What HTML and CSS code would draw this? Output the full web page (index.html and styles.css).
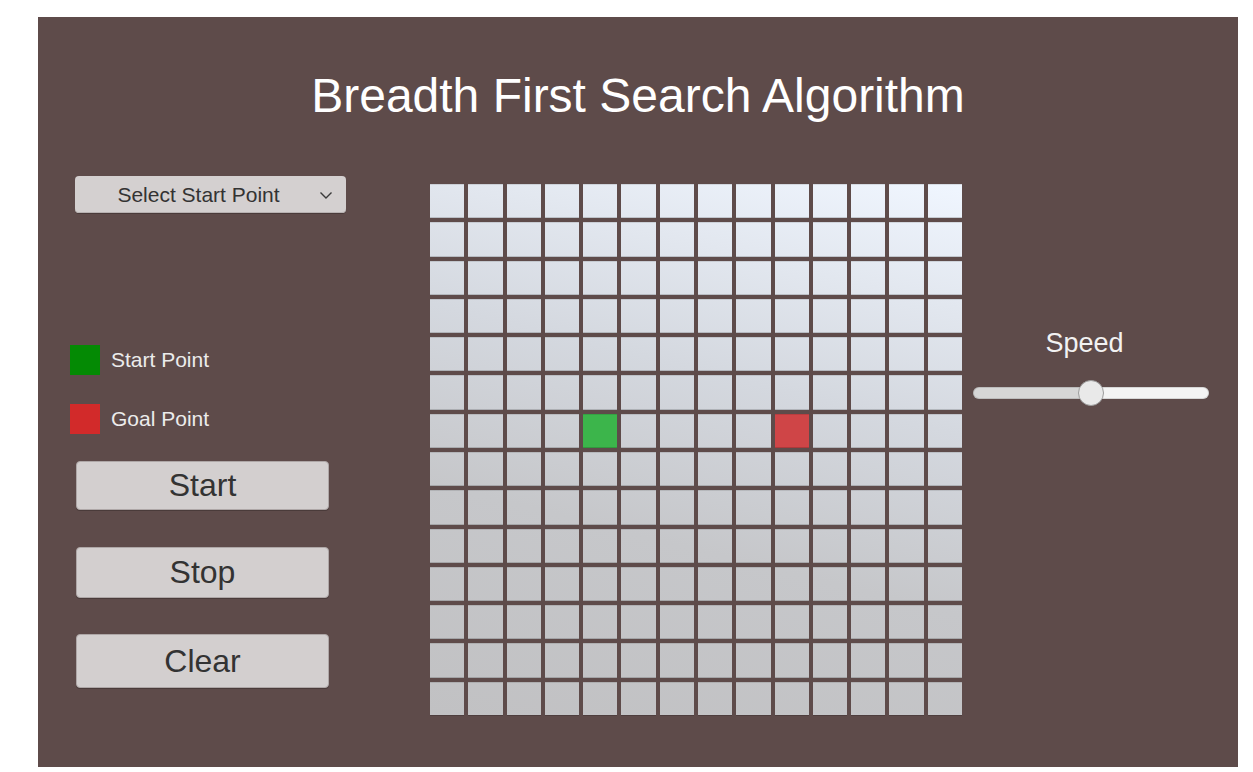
FILE: index.html
```html
<!DOCTYPE html>
<html lang="en">
<head>
  <meta charset="UTF-8" />
  <meta name="viewport" content="width=device-width, initial-scale=1.0" />
  <title>Breadth First Search Algorithm</title>
  <link rel="stylesheet" href="styles.css">
</head>
<body>
  <div class="panel">
    <h1 class="title">Breadth First Search Algorithm</h1>

    <div class="main">
      <div class="controls">
        <div class="dropdown">
          <span>Select Start Point</span>
          <svg class="chevron" width="14" height="9" viewBox="0 0 14 9">
            <polyline points="1.5,1.5 7,7 12.5,1.5" fill="none" stroke="#3a3a3a" stroke-width="1.4" />
          </svg>
        </div>

        <div class="legend">
          <div class="legend-item"><span class="swatch start"></span>Start Point</div>
          <div class="legend-item"><span class="swatch goal"></span>Goal Point</div>
        </div>

        <button class="btn btn-start">Start</button>
        <button class="btn btn-stop">Stop</button>
        <button class="btn btn-clear">Clear</button>
      </div>

      <div id="grid" class="grid"></div>

      <div class="speed">
        <div class="speed-label">Speed</div>
        <div class="slider">
          <div class="track"></div>
          <div class="knob"></div>
        </div>
      </div>
    </div>
  </div>

  <script src="grid.js"></script>
</body>
</html>
```

FILE: styles.css
```css
body {
  margin: 0;
  background: #ffffff;
  font-family: "Liberation Sans", Arial, sans-serif;
}
.panel {
  width: 1200px;
  height: 750px;
  margin: 17px 0 0 38px;
  background: #5e4b4a;
  overflow: hidden;
}
.title {
  margin: 0;
  padding-top: 55px;
  font-size: 48px;
  line-height: 48px;
  font-weight: normal;
  text-align: center;
  color: #ffffff;
}
.main {
  display: flex;
  margin-top: 56px;
}
.controls {
  width: 392px;
  display: flex;
  flex-direction: column;
  align-items: flex-start;
}
.dropdown {
  position: relative;
  margin-left: 37px;
  width: 271px;
  height: 37px;
  box-sizing: border-box;
  padding-right: 24px;
  display: flex;
  align-items: center;
  justify-content: center;
  background: #d4d0d0;
  border-radius: 4px;
  box-shadow: 0 1px 0 #4a3b3a, inset 0 -1px 0 #b8b2b2;
  font-size: 21px;
  color: #333333;
}
.chevron {
  position: absolute;
  right: 13px;
  top: 15px;
}
.legend {
  margin-top: 132px;
  margin-left: 32px;
}
.legend-item {
  display: flex;
  align-items: center;
  gap: 11px;
  height: 30px;
  margin-bottom: 29px;
  font-size: 21px;
  color: #ececec;
}
.swatch {
  width: 30px;
  height: 30px;
}
.swatch.start {
  background: #048a04;
}
.swatch.goal {
  background: #d22a2a;
}
.btn {
  margin-left: 38px;
  width: 253px;
  border: 1px solid #aea7a7;
  border-radius: 4px;
  background: #d3cfcf;
  box-shadow: 0 1px 0 #4a3b3a;
  font-family: "Liberation Sans", Arial, sans-serif;
  font-size: 32px;
  color: #333333;
  padding: 0;
}
.btn-start {
  margin-top: -2px;
  height: 49px;
}
.btn-stop {
  margin-top: 37px;
  height: 51px;
}
.btn-clear {
  margin-top: 36px;
  height: 54px;
}
.grid {
  margin-top: 8px;
  width: 532px;
  height: 532px;
  display: grid;
  grid-template-columns: repeat(14, 1fr);
  grid-template-rows: repeat(14, 1fr);
  gap: 4px;
}
.cell {
  background: linear-gradient(14deg, #c1c1c3 0%, #c6c7ca 35%, #d4d8df 62%, #f0f6ff 100%);
  background-attachment: fixed;
  background-position: 430px 183px;
  background-size: 532px 532px;
  background-repeat: no-repeat;
  box-shadow: inset 0 1px 0 rgba(0, 0, 0, 0.1), inset 0 -1px 0 rgba(0, 0, 0, 0.16);
}
.cell.start {
  background: #3cb54b;
}
.cell.goal {
  background: #cf4547;
}
.speed {
  margin-left: 11px;
  width: 236px;
  padding-top: 154px;
}
.speed-label {
  padding-right: 13px;
  text-align: center;
  font-size: 27px;
  line-height: 27px;
  color: #f2f2f2;
}
.slider {
  position: relative;
  margin-top: 23px;
  height: 26px;
}
.track {
  position: absolute;
  left: 0;
  right: 0;
  top: 7px;
  height: 12px;
  border-radius: 6px;
  background: linear-gradient(to right, #d6d6d6 50%, #f4f4f4 50%);
  box-shadow: inset 0 0 0 1px rgba(0, 0, 0, 0.12);
}
.knob {
  position: absolute;
  left: 105px;
  top: 0;
  width: 26px;
  height: 26px;
  box-sizing: border-box;
  border-radius: 50%;
  background: #e9e9e9;
  border: 1px solid #9c9c9c;
}
```

FILE: grid.js
```js
const ROWS = 14;
const COLS = 14;
const startCell = { row: 6, col: 4 };
const goalCell = { row: 6, col: 9 };

function buildGrid() {
  const grid = document.getElementById('grid');
  for (let r = 0; r < ROWS; r++) {
    for (let c = 0; c < COLS; c++) {
      const cell = document.createElement('div');
      cell.className = 'cell';
      if (r === startCell.row && c === startCell.col) cell.classList.add('start');
      if (r === goalCell.row && c === goalCell.col) cell.classList.add('goal');
      grid.appendChild(cell);
    }
  }
}

buildGrid();
```
